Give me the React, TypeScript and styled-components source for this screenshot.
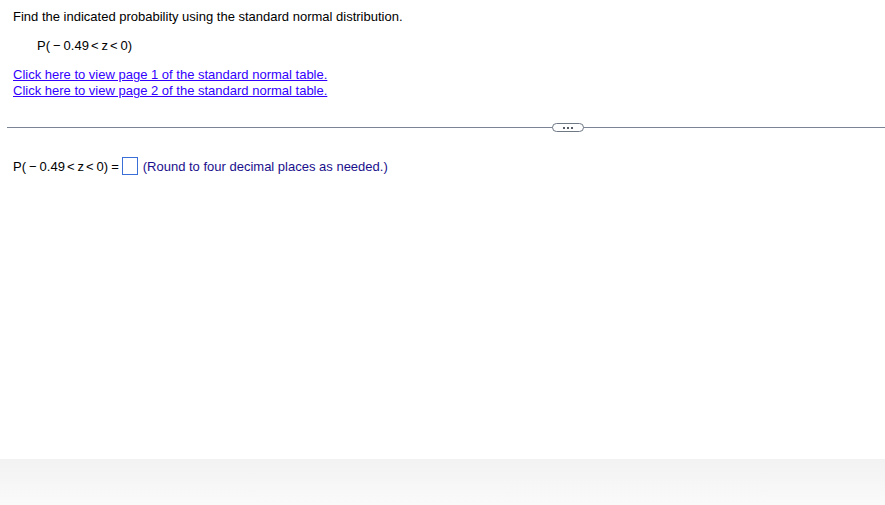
import React from "react";
import styled, { createGlobalStyle } from "styled-components";

const Global = createGlobalStyle`
  html, body { margin: 0; padding: 0; background: #fff; }
  body { font-family: Arial, "Liberation Sans", Helvetica, sans-serif; color: #000; }
`;

const Page = styled.div`
  width: 885px;
  height: 505px;
  display: flex;
  flex-direction: column;
  overflow: hidden;
`;

const Main = styled.div`
  flex: 1;
  display: flex;
  flex-direction: column;
`;

const Question = styled.div`
  padding: 9px 13px 0;
  font-size: 13px;
  line-height: 15px;
`;

const Prompt = styled.div`
  margin: 0;
`;

const Expr = styled.div`
  margin: 14px 0 0 24px;
  font-size: 13px;
  line-height: 15px;
`;

const Links = styled.div`
  margin-top: 14px;
  display: flex;
  flex-direction: column;
  gap: 1px;
`;

const Link = styled.a`
  color: #3300ff;
  text-decoration: underline;
  font-size: 13px;
  line-height: 15px;
  cursor: pointer;
`;

const Divider = styled.div`
  margin: 29px 0 0 7px;
  height: 1px;
  background: #7a8494;
  position: relative;
`;

const Pill = styled.div`
  position: absolute;
  left: 545px;
  top: -4px;
  width: 30px;
  height: 7px;
  border: 1px solid #6f7885;
  border-radius: 5px;
  background: #fff;
  display: flex;
  align-items: center;
  justify-content: center;
  gap: 2px;
`;

const Dot = styled.span`
  width: 2px;
  height: 2px;
  background: #555d6a;
`;

const Answer = styled.div`
  padding: 29px 13px 0;
  display: flex;
  align-items: center;
  font-size: 13px;
  line-height: 15px;
`;

const Op = styled.span<{ $l?: number; $r?: number }>`
  padding: 0 ${(p) => p.$r ?? 3}px 0 ${(p) => p.$l ?? 2}px;
`;

const Box = styled.span`
  display: inline-block;
  width: 14px;
  height: 16px;
  border: 1px solid #3a6fd8;
  margin: 0 5px 0 3px;
`;

const Hint = styled.span`
  color: #1a0f8c;
`;

const Footer = styled.div`
  height: 46px;
  background: linear-gradient(#f2f2f2, #fafafa);
`;

const Rel = () => (
  <span>
    P(<Op $l={3} $r={3}>−</Op>0.49<Op>&lt;</Op>z<Op>&lt;</Op>0)
  </span>
);

export default function App() {
  return (
    <Page>
      <Global />
      <Main>
        <Question>
          <Prompt>Find the indicated probability using the standard normal distribution.</Prompt>
          <Expr><Rel /></Expr>
          <Links>
            <Link>Click here to view page 1 of the standard normal table.</Link>
            <Link>Click here to view page 2 of the standard normal table.</Link>
          </Links>
        </Question>
        <Divider>
          <Pill><Dot /><Dot /><Dot /></Pill>
        </Divider>
        <Answer>
          <Rel />
          <Op $l={3} $r={0}>=</Op>
          <Box />
          <Hint>(Round to four decimal places as needed.)</Hint>
        </Answer>
      </Main>
      <Footer />
    </Page>
  );
}
